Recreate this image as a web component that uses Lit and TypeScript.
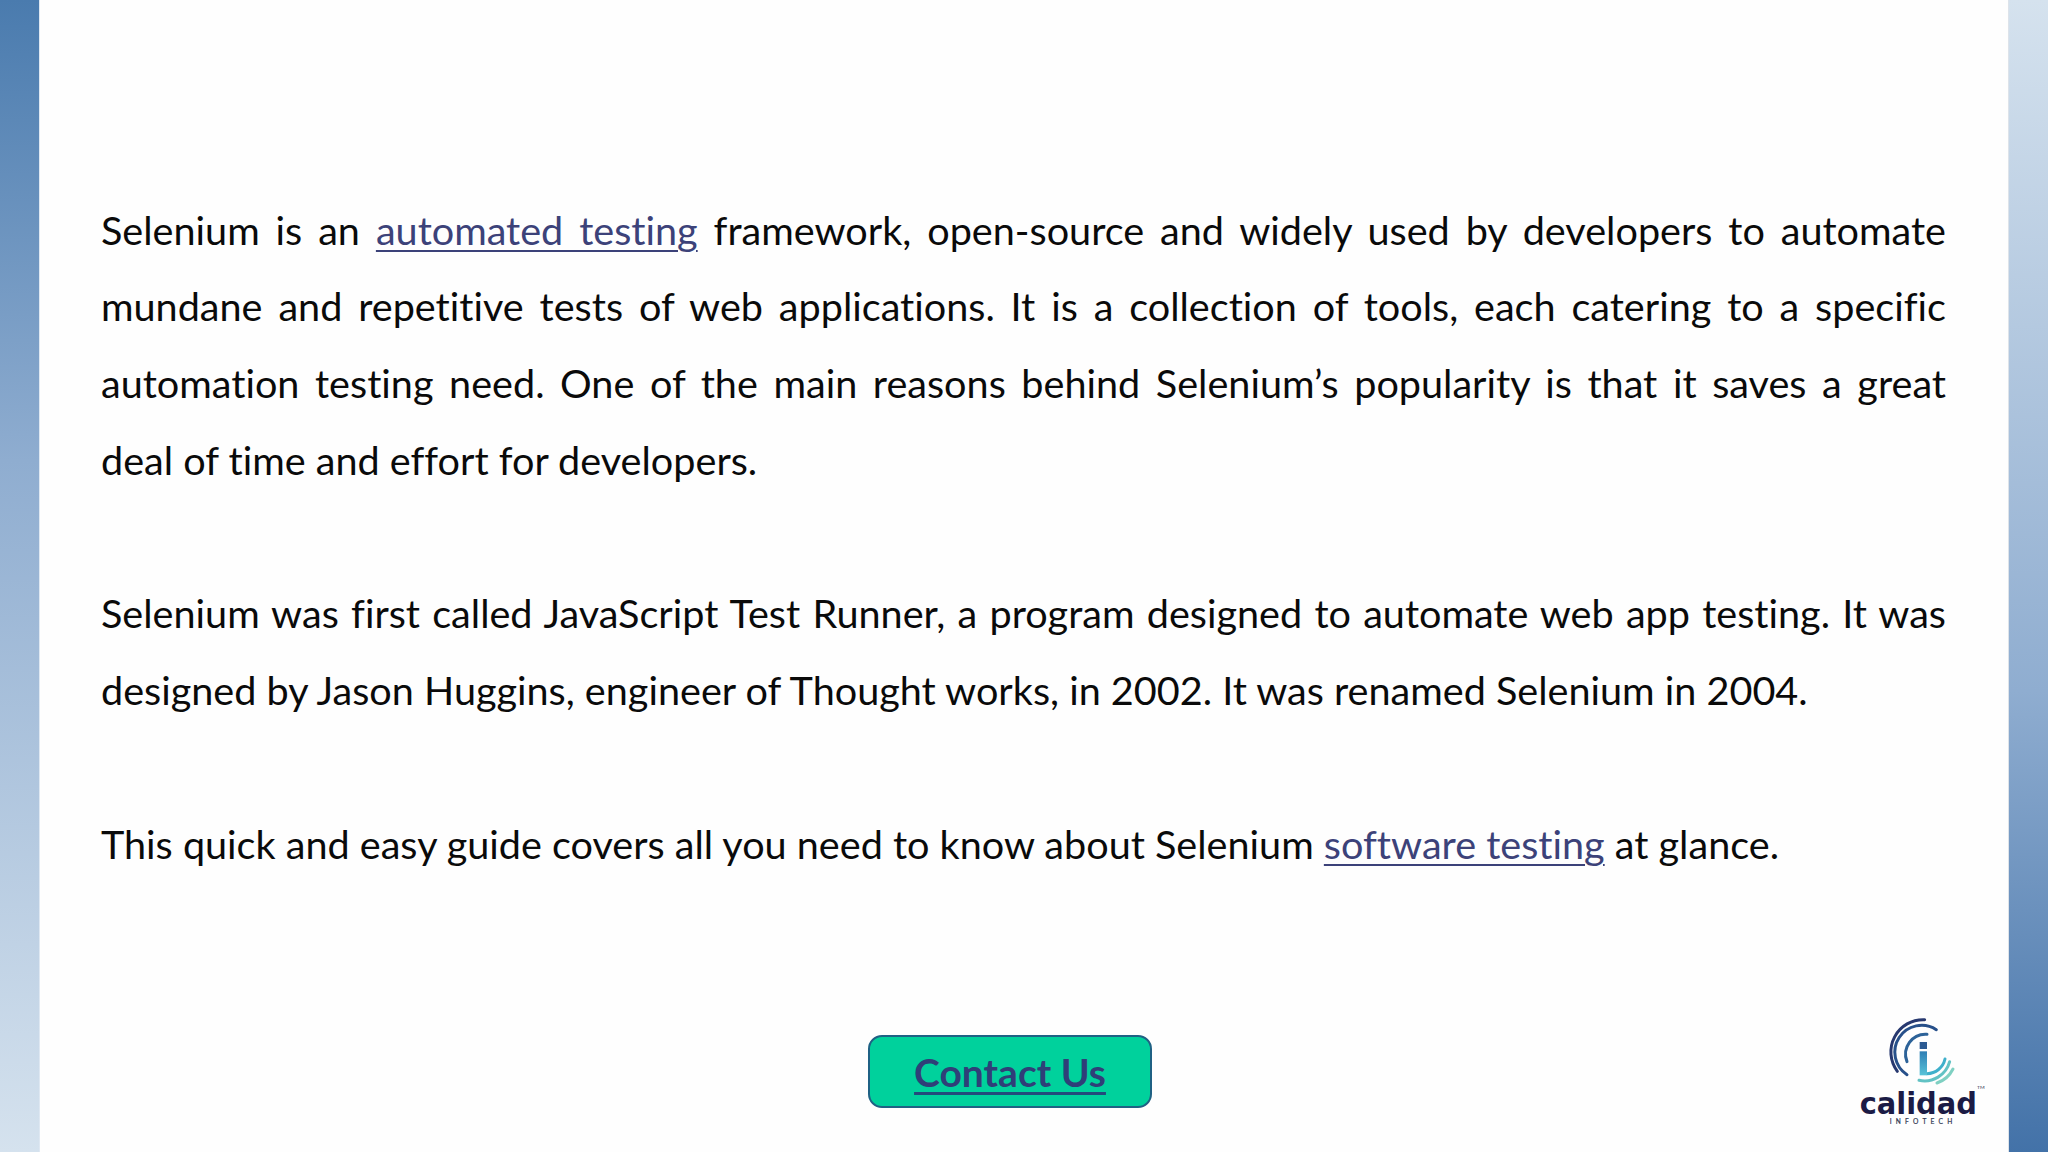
import { LitElement, html, css, svg } from "lit";
import { customElement } from "lit/decorators.js";

const logo = svg`
  <defs>
    <linearGradient id="stem" x1="0" y1="0" x2="0" y2="1"><stop offset="0" stop-color="#2f7fb5"/><stop offset="1" stop-color="#58c3d8"/></linearGradient>
  </defs>
  <g fill="none" stroke-linecap="round">
    <path d="M315 90A97 97 0 0 0 233 245" stroke="#27386f" stroke-width="9"/>
    <path d="M350 120A78 78 0 0 0 262 255" stroke="#27508a" stroke-width="9"/>
    <path d="M322 134A60 60 0 0 0 262 216" stroke="#2c6298" stroke-width="9"/>
    <path d="M376 208A56 56 0 0 1 322 252" stroke="#3fb0cb" stroke-width="9"/>
    <path d="M390 216A78 78 0 0 1 298 272" stroke="#62c2c4" stroke-width="9"/>
    <path d="M400 238A84 84 0 0 1 352 280" stroke="#7fd0c2" stroke-width="9"/>
  </g>
  <rect x="300" y="157" width="22" height="21" fill="#2c5a92"/>
  <rect x="300" y="185" width="22" height="72" fill="url(#stem)"/>
  <text x="120" y="372" class="brand" textLength="352" lengthAdjust="spacingAndGlyphs">calidad</text>
  <text x="210" y="403" class="sub" textLength="188">INFOTECH</text>
  <text x="472" y="297" class="tm" textLength="23" lengthAdjust="spacingAndGlyphs">TM</text>
`;

@customElement("app-root")
export class AppRoot extends LitElement {
  static styles = css`
    :host { display: block; width: 2048px; height: 1152px; overflow: hidden; background: #fefefe; font-family: Lato, "Liberation Sans", sans-serif; font-variant-ligatures: none; }
    .page { display: flex; height: 1152px; }
    .bar { width: 40px; flex: none; box-sizing: border-box; }
    .left { background: linear-gradient(180deg, #4a7bae 0%, #8fadd0 40%, #d5e2ee 100%); border-right: 1px solid #dfe8f2; }
    .right { background: linear-gradient(180deg, #d5e2ee 0%, #8fadd0 60%, #4372a8 100%); border-left: 1px solid #dde3ea; }
    .main { flex: 1; min-width: 0; display: flex; flex-direction: column; padding-top: 191.5px; }
    .text { padding: 0 62px 0 61px; font-size: 39.6px; line-height: 76.8px; color: #0a0a0a; }
    .j { display: block; text-align: justify; text-align-last: justify; white-space: nowrap; }
    .n { display: block; white-space: nowrap; }
    p { margin: 0 0 76.8px; }
    p:last-child { margin-bottom: 0; }
    a { color: #3c4279; text-decoration: underline; text-decoration-thickness: 2px; text-underline-offset: 5px; }
    .footer { flex: 1; display: flex; align-items: flex-start; justify-content: space-between; padding: 0 18px 0 828px; }
    .btn { width: 284px; height: 73px; margin-top: 152.5px; box-sizing: border-box; display: flex; align-items: center; justify-content: center; background: #00d19c; border: 2px solid #1f6184; border-radius: 14px; font-size: 39px; font-weight: 700; color: #2f3f78; text-decoration: underline; text-decoration-color: #24497c; text-decoration-thickness: 3px; text-underline-offset: 5px; }
    .logo { width: 136.67px; height: 116.67px; margin-top: 130.5px; flex: none; }
    .brand { font: 700 92px "DejaVu Sans", sans-serif; fill: #1b1b45; }
    .sub { font: 400 20px Lato, sans-serif; fill: #333a55; stroke: #333a55; stroke-width: 0.6px; }
    .tm { font: 400 13px Lato, sans-serif; fill: #333a55; }
  `;

  render() {
    return html`<div class="page">
      <div class="bar left"></div>
      <main class="main">
        <div class="text">
          <p>
            <span class="j">Selenium is an <a>automated testing</a> framework, open-source and widely used by developers to automate</span>
            <span class="j">mundane and repetitive tests of web applications. It is a collection of tools, each catering to a specific</span>
            <span class="j">automation testing need. One of the main reasons behind Selenium’s popularity is that it saves a great</span>
            <span class="n">deal of time and effort for developers.</span>
          </p>
          <p>
            <span class="j">Selenium was first called JavaScript Test Runner, a program designed to automate web app testing. It was</span>
            <span class="n">designed by Jason Huggins, engineer of Thought works, in 2002. It was renamed Selenium in 2004.</span>
          </p>
          <p>
            <span class="n">This quick and easy guide covers all you need to know about Selenium <a>software testing</a> at glance.</span>
          </p>
        </div>
        <div class="footer">
          <div class="btn">Contact Us</div>
          <svg class="logo" viewBox="100 70 410 350">${logo}</svg>
        </div>
      </main>
      <div class="bar right"></div>
    </div>`;
  }
}
